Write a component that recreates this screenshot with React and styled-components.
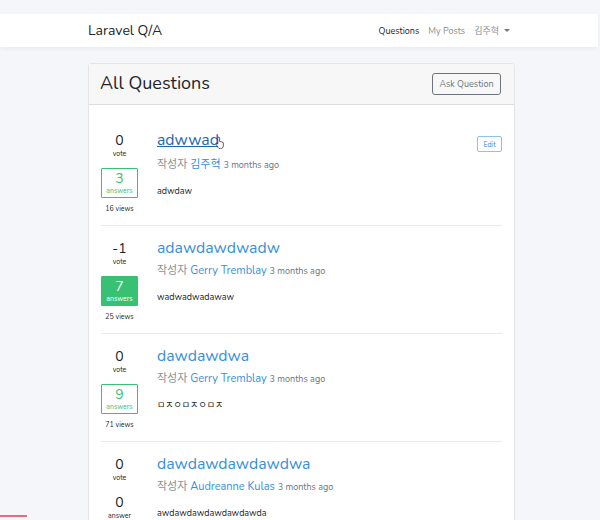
import React from "react";
import styled, { createGlobalStyle } from "styled-components";

const GlobalStyle = createGlobalStyle`
  html, body {
    margin: 0;
    padding: 0;
    background: #f4f6f9;
    font-family: "Nunito", "Lato", "Noto Sans CJK KR", sans-serif;
    color: #212529;
  }
  * { box-sizing: border-box; }
`;

const questions = [
  { id: 1, title: "adwwad", author: "김주혁", votes: 0, answers: 3, views: 16, body: "adwdaw", hover: true, edit: true },
  { id: 2, title: "adawdawdwadw", author: "Gerry Tremblay", votes: -1, answers: 7, views: 25, body: "wadwadwadawaw", accepted: true },
  { id: 3, title: "dawdawdwa", author: "Gerry Tremblay", votes: 0, answers: 9, views: 71, body: "ㅁㅈㅇㅁㅈㅇㅁㅈ" },
  { id: 4, title: "dawdawdawdawdwa", author: "Audreanne Kulas", votes: 0, answers: 0, views: 3, body: "awdawdawdawdawdawda" },
];

function Stats({ q }) {
  return (
    <StatsCol>
      <Count>{q.votes}</Count>
      <Label>vote</Label>
      {q.answers > 0 ? (
        <AnswerBox accepted={q.accepted}>
          <Count>{q.answers}</Count>
          <Label>answers</Label>
        </AnswerBox>
      ) : (
        <Plain>
          <Count>{q.answers}</Count>
          <Label>answer</Label>
        </Plain>
      )}
      <Views>{q.views} views</Views>
    </StatsCol>
  );
}

function App() {
  return (
    <Page>
      <GlobalStyle />
      <Navbar>
        <Container>
          <Brand>Laravel Q/A</Brand>
          <Nav>
            <NavLink active>Questions</NavLink>
            <NavLink>My Posts</NavLink>
            <NavLink>
              김주혁 <Caret />
            </NavLink>
          </Nav>
        </Container>
      </Navbar>
      <Main>
        <Card>
          <CardHeader>
            <Heading>All Questions</Heading>
            <OutlineButton>Ask Question</OutlineButton>
          </CardHeader>
          <CardBody>
            {questions.map((q) => (
              <Row key={q.id}>
                <Stats q={q} />
                <Content>
                  <TitleRow>
                    <Title hover={q.hover}>
                      {q.title}
                      {q.hover && (
                        <Pointer viewBox="0 0 12 14">
                          <path
                            d="M4 1.2c.6 0 1 .4 1 1V6l.3-.1c.5-.2 1 .1 1.1.5l.3-.1c.5-.2 1 .1 1.1.5l.3-.1c.5-.1 1 .2 1 .7v3.2c0 1.8-1.3 3.2-3 3.2H5.6c-1 0-1.7-.5-2.2-1.3L1.4 9.3c-.3-.5-.1-1 .3-1.2.4-.2.9 0 1.2.4l.1.2V2.2c0-.6.4-1 1-1z"
                            fill="#fff"
                            stroke="#222"
                            strokeWidth="0.8"
                          />
                        </Pointer>
                      )}
                    </Title>
                    {q.edit && <EditButton>Edit</EditButton>}
                  </TitleRow>
                  <Meta>
                    작성자 <Author>{q.author}</Author> <Ago>3 months ago</Ago>
                  </Meta>
                  <Body>{q.body}</Body>
                </Content>
              </Row>
            ))}
          </CardBody>
        </Card>
      </Main>
      <Progress />
    </Page>
  );
}

export default App;

const Page = styled.div`
  padding-top: 14px;
  overflow: hidden;
  height: 520px;
`;

const Navbar = styled.nav`
  background: #fff;
  width: 598px;
  height: 33px;
  box-shadow: 0 2px 4px rgba(0, 0, 0, 0.05);
  display: flex;
  align-items: center;
`;

const Container = styled.div`
  width: 427px;
  margin-left: 88px;
  display: flex;
  align-items: center;
  justify-content: space-between;
`;

const Brand = styled.a`
  font-size: 14px;
  color: #212529;
`;

const Nav = styled.div`
  display: flex;
  align-items: center;
  gap: 9px;
  padding-right: 5px;
`;

const NavLink = styled.a`
  font-size: 9px;
  color: ${(p) => (p.active ? "#212529" : "#8c8c8c")};
  display: flex;
  align-items: center;
  gap: 5px;
`;

const Caret = styled.span`
  width: 0;
  height: 0;
  border-left: 3px solid transparent;
  border-right: 3px solid transparent;
  border-top: 3px solid #777;
`;

const Main = styled.main`
  padding-top: 16px;
  padding-left: 88px;
`;

const Card = styled.div`
  width: 427px;
  background: #fff;
  border: 1px solid rgba(0, 0, 0, 0.1);
  border-radius: 4px;
`;

const CardHeader = styled.div`
  height: 41px;
  background: #f7f7f7;
  border-bottom: 1px solid rgba(0, 0, 0, 0.1);
  display: flex;
  align-items: center;
  justify-content: space-between;
  padding: 0 13px 0 11px;
`;

const Heading = styled.h2`
  margin: 0 0 3px;
  font-size: 18px;
  font-weight: 400;
  color: #212529;
`;

const OutlineButton = styled.button`
  font-family: inherit;
  font-size: 9px;
  color: #6c757d;
  background: transparent;
  border: 1px solid #6c757d;
  border-radius: 3px;
  width: 69px;
  height: 22px;
  padding: 0;
`;

const CardBody = styled.div`
  padding: 13px 12px 0 12px;
`;

const Row = styled.div`
  display: flex;
  padding: 15px 0 11px;
  border-bottom: 1px solid #e9ecef;
`;

const StatsCol = styled.div`
  width: 37px;
  flex-shrink: 0;
  display: flex;
  flex-direction: column;
  align-items: center;
  text-align: center;
`;

const Count = styled.div`
  font-size: 14px;
  line-height: 16px;
`;

const Label = styled.div`
  font-size: 7px;
  line-height: 10px;
`;

const AnswerBox = styled.div`
  width: 37px;
  height: 30px;
  margin-top: 9px;
  border: 1px solid #38c172;
  border-radius: 1px;
  background: ${(p) => (p.accepted ? "#38c172" : "#fff")};
  color: ${(p) => (p.accepted ? "#fff" : "#38c172")};
  display: flex;
  flex-direction: column;
  align-items: center;
  justify-content: center;
  gap: 1px;

  ${Count} {
    line-height: 14px;
  }
  ${Label} {
    line-height: 8px;
  }
`;

const Plain = styled.div`
  margin-top: 12px;
`;

const Views = styled.div`
  font-size: 7px;
  line-height: 10px;
  margin-top: 6px;
`;

const Content = styled.div`
  flex: 1;
  margin-left: 19px;
`;

const TitleRow = styled.div`
  display: flex;
  justify-content: space-between;
  align-items: flex-start;
`;

const Title = styled.a`
  position: relative;
  font-size: 15.8px;
  line-height: 20px;
  margin-top: -3px;
  color: ${(p) => (p.hover ? "#1d68a7" : "#3490dc")};
  text-decoration: ${(p) => (p.hover ? "underline" : "none")};
`;

const Pointer = styled.svg`
  position: absolute;
  right: -7px;
  top: 6px;
  width: 11px;
  height: 13px;
`;

const EditButton = styled.button`
  font-family: inherit;
  font-size: 7px;
  color: #3490dc;
  background: #fff;
  border: 1px solid #8ec1ec;
  border-radius: 2px;
  width: 25px;
  height: 16px;
  padding: 0;
  margin-top: 3px;
`;

const Meta = styled.div`
  font-size: 11px;
  line-height: 16px;
  margin-top: 5px;
  color: #8a8f94;
`;

const Author = styled.a`
  color: #3490dc;
`;

const Ago = styled.small`
  font-size: 9px;
  color: #6c757d;
`;

const Body = styled.p`
  font-size: 9px;
  line-height: 12px;
  margin: 12px 0 0;
  color: #212529;
`;

const Progress = styled.div`
  position: fixed;
  left: 0;
  bottom: 3px;
  width: 27px;
  height: 2px;
  background: #e0707a;
`;
